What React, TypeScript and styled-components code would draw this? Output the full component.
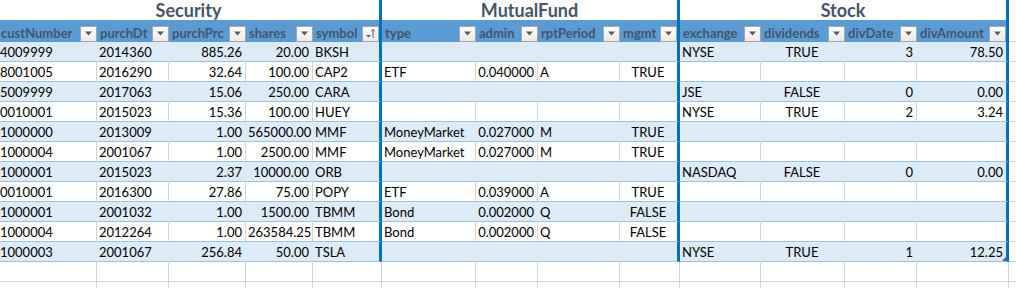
import React from 'react'
import styled, { createGlobalStyle, css } from 'styled-components'

const GlobalStyle = createGlobalStyle`
  html, body {
    margin: 0;
    padding: 0;
    background: #ffffff;
    overflow: hidden;
  }
`

// column widths in px (each includes its own right gridline)
const COLS = '99px 72px 77px 67px 69px 94px 62px 82px 60px 81px 84px 72px 92px 1fr'

const GRID = '#d4d4d4'
const BAND = '#ddebf7'
const BAND_LINE = '#9bc2e6'
const EDGE = '#0070c0'

type Align = 'left' | 'right' | 'center'

type Col = { label: string; align: Align; thick?: boolean; sort?: boolean }

const columns: Col[] = [
  { label: 'custNumber', align: 'left' },
  { label: 'purchDt', align: 'left' },
  { label: 'purchPrc', align: 'right' },
  { label: 'shares', align: 'right' },
  { label: 'symbol', align: 'left', thick: true, sort: true },
  { label: 'type', align: 'left' },
  { label: 'admin', align: 'right' },
  { label: 'rptPeriod', align: 'left' },
  { label: 'mgmt', align: 'center', thick: true },
  { label: 'exchange', align: 'left' },
  { label: 'dividends', align: 'center' },
  { label: 'divDate', align: 'right' },
  { label: 'divAmount', align: 'right', thick: true },
]

const rows: string[][] = [
  ['4009999', '2014360', '885.26', '20.00', 'BKSH', '', '', '', '', 'NYSE', 'TRUE', '3', '78.50'],
  ['8001005', '2016290', '32.64', '100.00', 'CAP2', 'ETF', '0.040000', 'A', 'TRUE', '', '', '', ''],
  ['5009999', '2017063', '15.06', '250.00', 'CARA', '', '', '', '', 'JSE', 'FALSE', '0', '0.00'],
  ['0010001', '2015023', '15.36', '100.00', 'HUEY', '', '', '', '', 'NYSE', 'TRUE', '2', '3.24'],
  ['1000000', '2013009', '1.00', '565000.00', 'MMF', 'MoneyMarket', '0.027000', 'M', 'TRUE', '', '', '', ''],
  ['1000004', '2001067', '1.00', '2500.00', 'MMF', 'MoneyMarket', '0.027000', 'M', 'TRUE', '', '', '', ''],
  ['1000001', '2015023', '2.37', '10000.00', 'ORB', '', '', '', '', 'NASDAQ', 'FALSE', '0', '0.00'],
  ['0010001', '2016300', '27.86', '75.00', 'POPY', 'ETF', '0.039000', 'A', 'TRUE', '', '', '', ''],
  ['1000001', '2001032', '1.00', '1500.00', 'TBMM', 'Bond', '0.002000', 'Q', 'FALSE', '', '', '', ''],
  ['1000004', '2012264', '1.00', '263584.25', 'TBMM', 'Bond', '0.002000', 'Q', 'FALSE', '', '', '', ''],
  ['1000003', '2001067', '256.84', '50.00', 'TSLA', '', '', '', '', 'NYSE', 'TRUE', '1', '12.25'],
]

const Sheet = styled.div`
  margin-left: -2px;
  width: 1020px;
  font-family: Lato, 'Open Sans', sans-serif;
  color: #000;
`

const Row = styled.div<{ h?: number }>`
  display: grid;
  grid-template-columns: ${COLS};
  height: ${({ h }) => h ?? 20}px;
`

const TitleCell = styled.div<{ span: string; thick?: boolean }>`
  grid-column: ${({ span }) => span};
  box-sizing: border-box;
  border-right: ${({ thick }) => (thick ? `3px solid ${EDGE}` : 'none')};
  text-align: center;
  font-weight: 700;
  font-size: 18px;
  line-height: 20px;
  color: #44546a;
`

const HeadCell = styled.div<{ thick?: boolean }>`
  box-sizing: border-box;
  display: flex;
  align-items: center;
  justify-content: space-between;
  min-width: 0;
  padding: 4px 0 0 3px;
  background: #5b9bd5;
  border-right: ${({ thick }) => (thick ? `3px solid ${EDGE}` : 'none')};
  color: #44546a;
  font-weight: 700;
  font-size: 13px;
`

const HeadLabel = styled.span`
  overflow: hidden;
  white-space: nowrap;
`

const FilterButton = styled.span`
  flex: none;
  box-sizing: border-box;
  width: 17px;
  height: 16px;
  margin-top: 1px;
  display: flex;
  align-items: center;
  justify-content: center;
  background: linear-gradient(#ffffff, #eaeaea);
  border: 1px solid #a5a5a5;
`

const Cell = styled.div<{ align: Align; band?: boolean; thick?: boolean; empty?: boolean; corner?: boolean }>`
  position: relative;
  box-sizing: border-box;
  min-width: 0;
  padding: 0 3px 0 2px;
  font-size: 13px;
  line-height: 20px;
  white-space: nowrap;
  overflow: hidden;
  text-align: ${({ align }) => align};
  background: ${({ band }) => (band ? BAND : '#ffffff')};
  border-bottom: 1px solid ${({ empty }) => (empty ? GRID : BAND_LINE)};
  ${({ band, thick, empty }) =>
    thick && !empty
      ? css`border-right: 3px solid ${EDGE};`
      : band
        ? css`border-right: 1px solid ${BAND};`
        : css`border-right: 1px solid ${GRID};`}
  ${({ corner }) =>
    corner &&
    css`
      &::after {
        content: '';
        position: absolute;
        right: 0;
        bottom: 0;
        border-left: 4px solid transparent;
        border-bottom: 4px solid #5b4fa8;
      }
    `}
`

const Arrow = () => (
  <svg width="9" height="5" viewBox="0 0 9 5">
    <path d="M1 0.5h7L4.5 4.5z" fill="#5a5a5a" />
  </svg>
)

const SortArrow = () => (
  <svg width="11" height="11" viewBox="0 0 11 11">
    <path d="M1 7h5L3.5 9.5z" fill="#5a5a5a" />
    <path d="M8 10V1.5M6.3 3.4L8 1.5l1.7 1.9" stroke="#5a5a5a" strokeWidth="1" fill="none" />
  </svg>
)

export default function App() {
  return (
    <>
      <GlobalStyle />
      <Sheet>
        <Row>
          <TitleCell span="1 / 6" thick>Security</TitleCell>
          <TitleCell span="6 / 10" thick>MutualFund</TitleCell>
          <TitleCell span="10 / 14" thick>Stock</TitleCell>
        </Row>
        <Row h={22}>
          {columns.map((c) => (
            <HeadCell key={c.label} thick={c.thick}>
              <HeadLabel>{c.label}</HeadLabel>
              <FilterButton>{c.sort ? <SortArrow /> : <Arrow />}</FilterButton>
            </HeadCell>
          ))}
          <Cell align="left" empty />
        </Row>
        {rows.map((r, i) => (
          <Row key={i}>
            {r.map((v, j) => (
              <Cell
                key={j}
                align={columns[j].align}
                band={i % 2 === 0}
                thick={columns[j].thick}
                corner={i === rows.length - 1 && j === r.length - 1}
              >
                {v}
              </Cell>
            ))}
            <Cell align="left" empty />
          </Row>
        ))}
        {[0, 1].map((k) => (
          <Row key={`e${k}`}>
            {columns.map((c) => (
              <Cell key={c.label} align="left" empty />
            ))}
            <Cell align="left" empty />
          </Row>
        ))}
      </Sheet>
    </>
  )
}
